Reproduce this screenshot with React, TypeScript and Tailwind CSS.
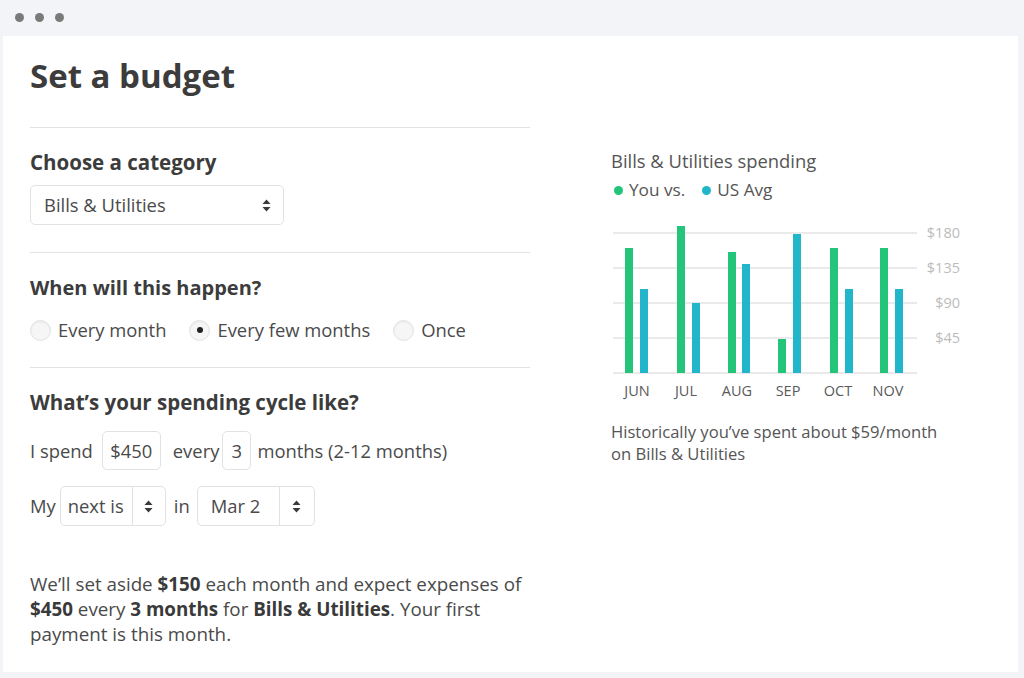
import React from 'react';

const font = { fontFamily: '"Open Sans", Lato, sans-serif' };

const Arrows: React.FC = () => (
  <svg width="9" height="13" viewBox="0 0 9 13" className="shrink-0">
    <path d="M4.5 0.5 L8.5 5 L0.5 5 Z" fill="#3a3a3a" />
    <path d="M4.5 12.5 L8.5 8 L0.5 8 Z" fill="#3a3a3a" />
  </svg>
);

const Radio: React.FC<{ label: string; checked?: boolean }> = ({ label, checked }) => (
  <label className="flex items-center gap-[7px]">
    <span className="w-[21px] h-[21px] rounded-full border border-[#e2e2e2] bg-[#f6f6f6] shadow-[inset_0_1px_2px_rgba(0,0,0,0.06)] flex items-center justify-center">
      {checked && <span className="w-[6px] h-[6px] rounded-full bg-[#222]" />}
    </span>
    <span>{label}</span>
  </label>
);

const grid = [
  { y: 18, label: '$180' },
  { y: 53, label: '$135' },
  { y: 88, label: '$90' },
  { y: 123, label: '$45' },
  { y: 158, label: '' },
];

const bars = [
  { m: 'JUN', c: 26, g: [14, 33], t: [29, 74] },
  { m: 'JUL', c: 75, g: [66, 11], t: [81, 88] },
  { m: 'AUG', c: 126, g: [117, 37], t: [131, 49] },
  { m: 'SEP', c: 177, g: [167, 124], t: [182, 19] },
  { m: 'OCT', c: 227, g: [219, 33], t: [234, 74] },
  { m: 'NOV', c: 277, g: [269, 33], t: [284, 74] },
];

const Chart: React.FC = () => (
  <svg width="360" height="186" viewBox="0 0 360 186">
    {grid.map(l => (
      <g key={l.y}>
        <line x1="2" x2="306" y1={l.y} y2={l.y} stroke="#e3e3e3" strokeWidth="1.5" />
        {l.label && (
          <text x="349" y={l.y + 5} textAnchor="end" fontSize="14.5" fill="#bcbcbc" style={font}>
            {l.label}
          </text>
        )}
      </g>
    ))}
    {bars.map(b => (
      <g key={b.m}>
        <rect x={b.g[0]} y={b.g[1]} width="8" height={158 - b.g[1]} fill="#24c47a" />
        <rect x={b.t[0]} y={b.t[1]} width="8" height={158 - b.t[1]} fill="#21b6c9" />
        <text x={b.c} y="181" textAnchor="middle" fontSize="14.5" fill="#5a5a5a" style={font}>
          {b.m}
        </text>
      </g>
    ))}
  </svg>
);

const App: React.FC = () => {
  return (
    <div className="w-[1024px] h-[678px] bg-[#f3f4f7] flex flex-col overflow-hidden" style={font}>
      <div className="h-[36px] shrink-0 flex items-center gap-[11px] pl-[15px] pb-[2px]">
        <span className="w-[9px] h-[9px] rounded-full bg-[#7a7a7a]" />
        <span className="w-[9px] h-[9px] rounded-full bg-[#7a7a7a]" />
        <span className="w-[9px] h-[9px] rounded-full bg-[#7a7a7a]" />
      </div>
      <div className="flex-1 ml-[3px] mr-[6px] mb-[6px] bg-white flex pl-[27px] text-[#4a4a4a]">
        <div className="w-[500px] shrink-0 flex flex-col">
          <h1 className="pt-[22px] text-[33px] leading-[36px] font-bold text-[#3c3c3c]">Set a budget</h1>
          <div className="mt-[33px] border-t-[1.5px] border-[#e2e2e2]" />

          <h2 className="mt-[22px] text-[20.5px] leading-[24px] font-bold text-[#3c3c3c]">Choose a category</h2>
          <div className="mt-[11px] w-[254px] h-[40px] border border-[#e2e2e2] rounded-[5px] flex items-center justify-between pl-[13px] pr-[12px] text-[18.4px]">
            <span>Bills &amp; Utilities</span>
            <Arrows />
          </div>
          <div className="mt-[27px] border-t-[1.5px] border-[#e2e2e2]" />

          <h2 className="mt-[23px] text-[20px] leading-[24px] font-bold text-[#3c3c3c]">When will this happen?</h2>
          <div className="mt-[18px] h-[24px] flex items-center gap-[23px] text-[18.4px]">
            <Radio label="Every month" />
            <Radio label="Every few months" checked />
            <Radio label="Once" />
          </div>
          <div className="mt-[25px] border-t-[1.5px] border-[#e2e2e2]" />

          <h2 className="mt-[22px] text-[20.5px] leading-[24px] font-bold text-[#3c3c3c]">What’s your spending cycle like?</h2>
          <div className="mt-[17px] h-[39px] flex items-center text-[18.4px]">
            <span>I spend</span>
            <span className="ml-[9px] w-[59px] h-[39px] border border-[#e2e2e2] rounded-[5px] flex items-center justify-center">$450</span>
            <span className="ml-[12px]">every</span>
            <span className="ml-[3px] w-[29px] h-[39px] border border-[#e2e2e2] rounded-[5px] flex items-center justify-center">3</span>
            <span className="ml-[6px]">months (2-12 months)</span>
          </div>
          <div className="mt-[16px] h-[40px] flex items-center text-[18.4px]">
            <span>My</span>
            <div className="ml-[4px] w-[106px] h-[40px] border border-[#e2e2e2] rounded-[5px] flex items-stretch">
              <span className="flex-1 flex items-center pl-[7px] border-r border-[#e2e2e2]">next is</span>
              <span className="w-[32px] flex items-center justify-center"><Arrows /></span>
            </div>
            <span className="ml-[8px]">in</span>
            <div className="ml-[7px] w-[118px] h-[40px] border border-[#e2e2e2] rounded-[5px] flex items-stretch">
              <span className="flex-1 flex items-center pl-[13px] border-r border-[#e2e2e2]">Mar 2</span>
              <span className="w-[34px] flex items-center justify-center"><Arrows /></span>
            </div>
          </div>

          <p className="mt-[46px] text-[18.8px] leading-[25px]">
            We’ll set aside <b className="text-[#3a3a3a]">$150</b> each month and expect expenses of
            <br />
            <b className="text-[#3a3a3a]">$450</b> every <b className="text-[#3a3a3a]">3 months</b> for{' '}
            <b className="text-[#3a3a3a]">Bills &amp; Utilities</b>. Your first
            <br />
            payment is this month.
          </p>
        </div>

        <div className="ml-[81px] pt-[113px] flex flex-col text-[#555]">
          <div className="text-[18.4px] leading-[24px]">Bills &amp; Utilities spending</div>
          <div className="mt-[5px] h-[24px] flex items-center text-[17.2px]">
            <span className="ml-[3px] w-[9px] h-[9px] rounded-full bg-[#24c47a]" />
            <span className="ml-[6px]">You vs.</span>
            <span className="ml-[17px] w-[9px] h-[9px] rounded-full bg-[#21b6c9]" />
            <span className="ml-[6px]">US Avg</span>
          </div>
          <div className="mt-[13px]">
            <Chart />
          </div>
          <p className="mt-[20px] text-[16.6px] leading-[22px]">
            Historically you’ve spent about $59/month
            <br />
            on Bills &amp; Utilities
          </p>
        </div>
      </div>
    </div>
  );
};

export default App;
